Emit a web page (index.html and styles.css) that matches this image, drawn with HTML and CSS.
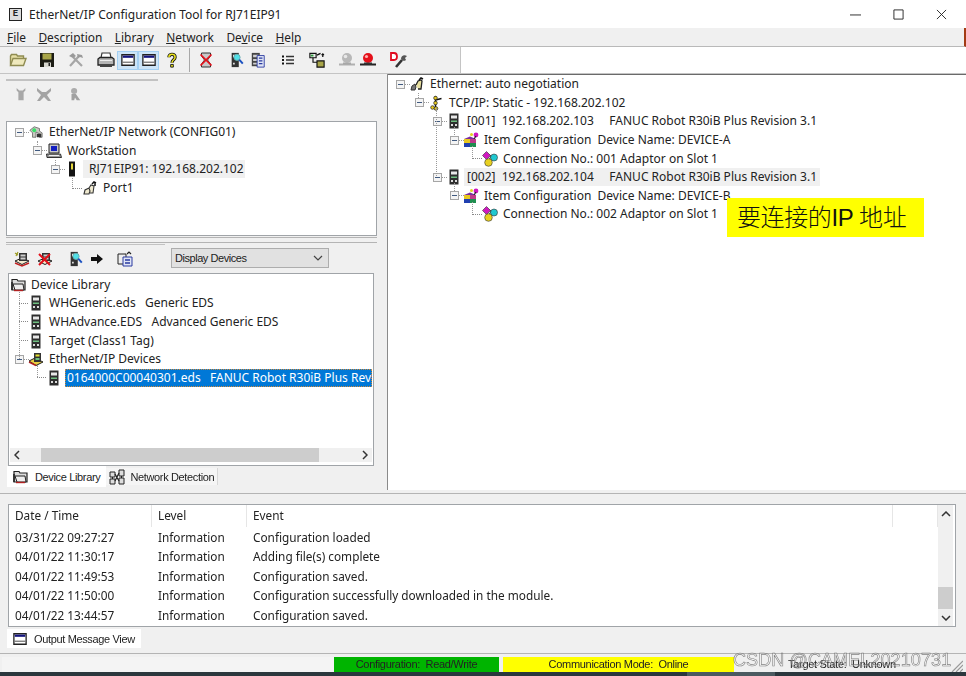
FILE: index.html
```html
<!DOCTYPE html>
<html lang="en">
<head>
  <meta charset="UTF-8" />
  <title>EtherNet/IP Configuration Tool for RJ71EIP91</title>
  <link rel="stylesheet" href="styles.css">
</head>
<body>
  <svg class="defs" aria-hidden="true">
    <symbol id="i-folder" viewBox="0 0 18 16"><path d="M1.5 13V4l1-1.500h5l1 1.500h6v2" fill="#e6dfa6" stroke="#8f8c52" stroke-width="1.400"/><path d="M1.500 13.500l2.500-7h13l-2.500 7z" fill="#efe9bd" stroke="#8f8c52" stroke-width="1.400"/></symbol>
    <symbol id="i-save" viewBox="0 0 16 16"><path d="M1 1h14v14H1z" fill="#1c1c14"/><path d="M3.500 1.500h9v6h-9z" fill="#a8a548"/><path d="M5 10.500h7v4.500H5z" fill="#d8d8d0"/><path d="M9.500 11h1.500v3H9.500z" fill="#222"/></symbol>
    <symbol id="i-tools" viewBox="0 0 16 16"><path d="M2 14L11 4M14 14L5 5" stroke="#a6a6a6" stroke-width="2.200"/><path d="M1 4l4-3 3 3-3 2zM9 2l5 1 1 3-3-1-2 1z" fill="#9a9a9a"/></symbol>
    <symbol id="i-print" viewBox="0 0 18 16"><path d="M5 1h8l1 5H4z" fill="#fff" stroke="#333" stroke-width="1.200"/><path d="M1 7l2-1.500h12l2 1.500v6H1z" fill="#b5b5b5" stroke="#222" stroke-width="1.300"/><path d="M3 13h12v2H3z" fill="#444"/><path d="M3 8.500h12" stroke="#eee"/></symbol>
    <symbol id="i-panel" viewBox="0 0 16 14"><path d="M1 1h14v12H1z" fill="#fff" stroke="#222" stroke-width="1.500"/><path d="M2 2h12v2.500H2z" fill="#12127e"/><path d="M2 9.500h12" stroke="#333"/></symbol>
    <symbol id="i-help" viewBox="0 0 16 18"><path d="M4.500 6c0-4.500 7-4.500 7 0 0 3-3.500 2.500-3.500 6" fill="none" stroke="#111" stroke-width="3.600"/><path d="M4.500 6c0-4.500 7-4.500 7 0 0 3-3.500 2.500-3.500 6" fill="none" stroke="#ece41e" stroke-width="1.700"/><path d="M6.500 14h3v3h-3z" fill="#ece41e" stroke="#111"/></symbol>
    <symbol id="i-del" viewBox="0 0 16 16"><path d="M3.500 1h9v3l-3 4 3 4v3h-9v-3l3-4-3-4z" fill="#c8c8c8" stroke="#333"/><path d="M2.500 2.500l11 11M13.500 2.500l-11 11" stroke="#e8101a" stroke-width="1.700"/></symbol>
    <symbol id="i-dev-find" viewBox="0 0 16 18"><path d="M2 1h8v16H2z" fill="#333"/><path d="M3.500 3h5v3h-5zM3.500 12h2v2h-2z" fill="#ddd"/><circle cx="8" cy="6" r="3.500" fill="#50e0e8" stroke="#6aa"/><path d="M10.500 8.500l4 4.500" stroke="#1a50c0" stroke-width="2.200"/></symbol>
    <symbol id="i-dev-list" viewBox="0 0 16 18"><path d="M1 1h9v15H1z" fill="#444"/><path d="M2.500 3h6v3h-6zM2.500 8h6v2h-6zM2.500 12h6v2h-6z" fill="#cfcfcf"/><path d="M7 4h8v13H7z" fill="#dfe4f5" stroke="#2a3aa0"/><path d="M9 7h4M9 10h4M9 13h4" stroke="#2a3aa0" stroke-width="1.400"/></symbol>
    <symbol id="i-list" viewBox="0 0 14 12"><path d="M1 1.500h2v2H1zM1 5h2v2H1zM1 8.500h2v2H1z" fill="#111"/><path d="M5 2.500h8M5 6h8M5 9.500h8" stroke="#333" stroke-width="1.400"/></symbol>
    <symbol id="i-net" viewBox="0 0 18 18"><path d="M1 1.500h7v5H1z" fill="#eee" stroke="#111" stroke-width="1.300"/><path d="M4.500 6.500v5h5" fill="none" stroke="#111" stroke-width="1.300"/><path d="M9 10h8v7H9z" fill="#a8a548" stroke="#111" stroke-width="1.300"/><path d="M9 3.500l4-2M14 3h3M15.500 1.500v4" stroke="#111" stroke-width="1.400"/><path d="M2 4h3" stroke="#2a9a3a" stroke-width="2"/></symbol>
    <symbol id="i-ball" viewBox="0 0 18 16"><circle cx="9" cy="6" r="5" fill="#b8b8b8"/><circle cx="7.500" cy="4.500" r="1.800" fill="#e8e8e8"/><path d="M1 12.500h16" stroke="#b0b0b0" stroke-width="2"/><path d="M5 10.500h8v2H5z" fill="#a8a8a8"/></symbol>
    <symbol id="i-ball-red" viewBox="0 0 18 16"><circle cx="9" cy="6" r="5" fill="#e4101a"/><circle cx="7.500" cy="4.500" r="1.600" fill="#ffb0b0"/><path d="M1 12.500h16" stroke="#222" stroke-width="2"/><path d="M5 10.500h8v2H5z" fill="#333"/></symbol>
    <symbol id="i-wrench" viewBox="0 0 18 16"><path d="M1 1h3c2 0 3 1.500 3 3.500S6 8 4 8H1z" fill="#fff" stroke="#e00c20" stroke-width="1.800"/><path d="M6 15l6-7" stroke="#333" stroke-width="2.600"/><path d="M11 7c0-3 3-5 6-3l-2 2 1 2c-2 1.500-4 1-5-1z" fill="#555"/></symbol>
    <symbol id="i-ant" viewBox="0 0 14 16"><path d="M2 1l3 3h4l3-3v3l-2 2v9H4V6L2 4z" fill="#a8a8a8"/></symbol>
    <symbol id="i-ant-x" viewBox="0 0 16 16"><path d="M1 1l5 4h4l5-4v3l-4 4 4 6h-3l-4-4-4 4H1l4-6-4-4z" fill="#a4a4a4"/></symbol>
    <symbol id="i-ant-s" viewBox="0 0 14 16"><circle cx="6" cy="4.500" r="3.500" fill="#ababab"/><path d="M3 8h5l5 7H9l-2-3-1 3H3z" fill="#a0a0a0"/></symbol>
    <symbol id="i-net-root" viewBox="0 0 16 14"><path d="M1 5l5-4 6 2v3l3 2v5h-3V9L8 7v6H4V8z" fill="#c8c8c0" stroke="#555" stroke-width=".8"/><circle cx="6" cy="5" r="2.200" fill="#38e068"/><path d="M9 9h5v4H9z" fill="#333"/></symbol>
    <symbol id="i-pc" viewBox="0 0 16 16"><path d="M3 1h10v9H3z" fill="#c8c8c8" stroke="#222"/><path d="M5 3h6v5H5z" fill="#1420c0"/><path d="M0.500 11h14l1 3.500H1z" fill="#999" stroke="#222" stroke-width=".9"/><path d="M3 12.500h10" stroke="#eee"/></symbol>
    <symbol id="i-module" viewBox="0 0 8 16"><path d="M1 .5h6v15H1z" fill="#141414"/><path d="M3 2.500h2v6H3z" fill="#e4d63c"/></symbol>
    <symbol id="i-port" viewBox="0 0 14 14"><path d="M1 13l1-4 4-2 1 3-1 3zM6 7l2-3 3 1-1 7H7" fill="#f0ead0" stroke="#333" stroke-width="1.100"/><path d="M9 3l2-2 2 1M12 2v3" fill="none" stroke="#111" stroke-width="1.500"/></symbol>
    <symbol id="i-eth" viewBox="0 0 14 14"><path d="M1 13l1-4 3-2 1 3-1 3z" fill="#777" stroke="#333"/><path d="M6 8l2-4 3-1 1 1-1 8H8" fill="#e8e0a0" stroke="#222" stroke-width="1.300"/><path d="M9 3l2-2 2 1" fill="none" stroke="#111" stroke-width="1.500"/></symbol>
    <symbol id="i-tcp" viewBox="0 0 14 16"><path d="M6.500 1v14M6.500 5l6-1.500" stroke="#111" stroke-width="1.500"/><circle cx="6.500" cy="3" r="1.800" fill="#e8cb20" stroke="#222" stroke-width=".7"/><circle cx="6.500" cy="8" r="1.800" fill="#e8cb20" stroke="#222" stroke-width=".7"/><circle cx="3.500" cy="12.500" r="1.800" fill="#e8cb20" stroke="#222" stroke-width=".7"/><circle cx="7" cy="13.500" r="1.800" fill="#e8cb20" stroke="#222" stroke-width=".7"/></symbol>
    <symbol id="i-device" viewBox="0 0 10 16"><path d="M.5 .5h9v15h-9z" fill="#2e2e2e"/><path d="M2 2.500h6v3H2z" fill="#e8e8e8"/><path d="M2 7.500h6v1.500H2z" fill="#6fbf80"/><path d="M2 11h2v2H2zM6 11h2v2H6z" fill="#ddd"/></symbol>
    <symbol id="i-item" viewBox="0 0 16 16"><path d="M1 7l6-2.500 6 2.500v8H1z" fill="#7a2ea0"/><path d="M1 7h6v4H1z" fill="#e8c820"/><path d="M7 11h6v4H7z" fill="#1f8f50"/><path d="M1 11h6v4H1z" fill="#2040b0"/><path d="M7 7h6v4H7z" fill="#c03a8a"/><circle cx="13" cy="3" r="2.400" fill="#d018c0"/><path d="M11 7l2-3" stroke="#222" stroke-width="1.200"/><circle cx="8.500" cy="2.600" r="1.500" fill="#e0d020"/></symbol>
    <symbol id="i-conn" viewBox="0 0 16 16"><path d="M4 2L9 5 6 11" stroke="#333" fill="none"/><path d="M0.500 4.500L4.500.5l4 4-4 4z" fill="#d018c0" stroke="#333" stroke-width=".6"/><circle cx="12" cy="6.500" r="3.500" fill="#20c8d0" stroke="#333" stroke-width=".6"/><circle cx="6.500" cy="11.500" r="3.800" fill="#e8d020" stroke="#333" stroke-width=".6"/></symbol>
    <symbol id="i-lib" viewBox="0 0 16 14"><path d="M1 3V1.500h5l1 1.500h7v9H1z" fill="#ddd" stroke="#222" stroke-width="1.200"/><path d="M2 6h10l1 6H4z" fill="#eee" stroke="#222"/><path d="M3 12.500h9" stroke="#b02020" stroke-width="1.400"/><path d="M1 4v8" stroke="#222" stroke-width="1.500"/></symbol>
    <symbol id="i-devbook" viewBox="0 0 16 14"><path d="M1 9l6-3 8 4-7 3.500z" fill="#e8d040" stroke="#222"/><path d="M6 1h7v9H6z" fill="#333"/><path d="M7.500 2.500h4v2h-4z" fill="#e6e030"/><path d="M7.500 6h4v2h-4z" fill="#6fbf80"/><path d="M1 10l7 3.500" stroke="#b02020" stroke-width="1.400"/></symbol>
    <symbol id="i-book-add" viewBox="0 0 16 16"><path d="M1 10l7 3.500 7-3.500-7-3z" fill="#f4ecd0" stroke="#222"/><path d="M5 2h8v8H5z" fill="#333"/><path d="M6.500 3.500h5v2h-5zM6.500 6.500h5v2h-5z" fill="#ccc"/><path d="M1 12l7 3 7-3" fill="none" stroke="#c02020" stroke-width="1.400"/><path d="M1 2l3 2M4 1L2 5" stroke="#9a9a20" stroke-width="1.200"/></symbol>
    <symbol id="i-book-x" viewBox="0 0 16 16"><path d="M1 10l7 3.500 7-3.500-7-3z" fill="#f4ecd0" stroke="#222"/><path d="M5 2h8v8H5z" fill="#333"/><path d="M6.500 3.500h5v2h-5zM6.500 6.500h5v2h-5z" fill="#ccc"/><path d="M2 3l11 11M13 3L2 14" stroke="#e4101a" stroke-width="2"/></symbol>
    <symbol id="i-arrow" viewBox="0 0 14 12"><path d="M1 4h6V1l6 5-6 5V8H1z" fill="#111"/></symbol>
    <symbol id="i-copy" viewBox="0 0 16 16"><path d="M1 3h8v10H1z" fill="#eee" stroke="#222"/><path d="M6 6h9v9H6z" fill="#dfe4f5" stroke="#2a3aa0"/><path d="M8 9h5M8 12h5" stroke="#2a3aa0" stroke-width="1.300"/><path d="M10 3l2-2 2 2" fill="none" stroke="#222" stroke-width="1.200"/></symbol>
    <symbol id="i-netdet" viewBox="0 0 16 16"><path d="M1 3h5v5H1zM10 1h5v6h-5zM1 10h5v5H1zM10 9h5v6h-5z" fill="#ddd" stroke="#222"/><path d="M3.500 8v2M12.500 7v2M6 5l4 7M10 4l-4 8" stroke="#222" stroke-width="1.200"/></symbol>
  </svg>

  <div class="window">
    <header class="titlebar">
      <span class="app-icon">E</span>
      <span class="app-title">EtherNet/IP Configuration Tool for RJ71EIP91</span>
      <div class="win-controls">
        <svg class="win-btn" viewBox="0 0 12 12"><path d="M0 6.500h12" stroke="#222"/></svg>
        <svg class="win-btn" viewBox="0 0 12 12"><path d="M1 1h10v10H1z" fill="none" stroke="#222"/></svg>
        <svg class="win-btn" viewBox="0 0 12 12"><path d="M1 1l10 10M11 1L1 11" stroke="#222"/></svg>
      </div>
    </header>

    <nav class="menubar">
      <span><u>F</u>ile</span>
      <span><u>D</u>escription</span>
      <span><u>L</u>ibrary</span>
      <span><u>N</u>etwork</span>
      <span>De<u>v</u>ice</span>
      <span><u>H</u>elp</span>
    </nav>

    <div class="toolbar">
      <div class="tools">
        <span class="tb-btn"><svg class="ic-18"><use href="#i-folder"/></svg></span>
        <span class="tb-btn g8"><svg class="ic-16"><use href="#i-save"/></svg></span>
        <span class="tb-btn g8"><svg class="ic-16"><use href="#i-tools"/></svg></span>
        <span class="tb-btn g9"><svg class="ic-18"><use href="#i-print"/></svg></span>
        <span class="tb-btn g1 active"><svg class="ic-14"><use href="#i-panel"/></svg></span>
        <span class="tb-btn active"><svg class="ic-14"><use href="#i-panel"/></svg></span>
        <span class="tb-btn g2"><svg class="ic-16"><use href="#i-help"/></svg></span>
        <span class="tb-sep"></span>
        <span class="tb-btn g5"><svg class="ic-16"><use href="#i-del"/></svg></span>
        <span class="tb-btn g10"><svg class="ic-16"><use href="#i-dev-find"/></svg></span>
        <span class="tb-btn"><svg class="ic-16"><use href="#i-dev-list"/></svg></span>
        <span class="tb-btn g9"><svg class="ic-14"><use href="#i-list"/></svg></span>
        <span class="tb-btn g8"><svg class="ic-18"><use href="#i-net"/></svg></span>
        <span class="tb-btn g9"><svg class="ic-18"><use href="#i-ball"/></svg></span>
        <span class="tb-btn"><svg class="ic-18"><use href="#i-ball-red"/></svg></span>
        <span class="tb-btn g10"><svg class="ic-18"><use href="#i-wrench"/></svg></span>
      </div>
      <div class="tool-blank"></div>
    </div>

    <main class="workspace">
      <section class="left">
        <div class="grip"></div>
        <div class="strip">
          <svg class="ic-14"><use href="#i-ant"/></svg>
          <svg class="ic-16 strip-x"><use href="#i-ant-x"/></svg>
          <svg class="ic-14 strip-s"><use href="#i-ant-s"/></svg>
        </div>

        <div class="tree-box net-tree">
          <div class="row lv0"><span class="exp"></span><span class="slot"><svg class="ic-14"><use href="#i-net-root"/></svg></span><span class="label">EtherNet/IP Network (CONFIG01)</span></div>
          <div class="row lv1"><span class="exp"></span><span class="slot"><svg class="ic-16"><use href="#i-pc"/></svg></span><span class="label">WorkStation</span></div>
          <div class="row lv2"><span class="exp"></span><span class="slot"><svg class="ic-module"><use href="#i-module"/></svg></span><span class="label hl">RJ71EIP91: 192.168.202.102</span></div>
          <div class="row lv-port"><span class="dash"></span><span class="slot"><svg class="ic-14"><use href="#i-port"/></svg></span><span class="label">Port1</span></div>
          <span class="vline v-a"></span><span class="vline v-b"></span><span class="vline v-c"></span>
        </div>

        <div class="splitter"></div>
        <div class="grip grip-2"></div>
        <div class="lib-tools">
          <svg class="ic-16"><use href="#i-book-add"/></svg>
          <svg class="ic-16 g-tight"><use href="#i-book-x"/></svg>
          <svg class="ic-16 g-wide"><use href="#i-dev-find"/></svg>
          <svg class="ic-14 g-arrow"><use href="#i-arrow"/></svg>
          <svg class="ic-16 g-copy"><use href="#i-copy"/></svg>
          <div class="combo">Display Devices<svg class="combo-arrow" viewBox="0 0 10 6"><path d="M1 1l4 4 4-4" fill="none" stroke="#444" stroke-width="1.200"/></svg></div>
        </div>

        <div class="tree-box lib-tree">
          <div class="row lib-root"><span class="slot"><svg class="ic-16"><use href="#i-lib"/></svg></span><span class="label">Device Library</span></div>
          <div class="row lib-leaf"><span class="dash short"></span><span class="slot"><svg class="ic-device"><use href="#i-device"/></svg></span><span class="label">WHGeneric.eds   Generic EDS</span></div>
          <div class="row lib-leaf"><span class="dash short"></span><span class="slot"><svg class="ic-device"><use href="#i-device"/></svg></span><span class="label">WHAdvance.EDS   Advanced Generic EDS</span></div>
          <div class="row lib-leaf"><span class="dash short"></span><span class="slot"><svg class="ic-device"><use href="#i-device"/></svg></span><span class="label">Target (Class1 Tag)</span></div>
          <div class="row lib-group"><span class="exp"></span><span class="slot"><svg class="ic-16"><use href="#i-devbook"/></svg></span><span class="label">EtherNet/IP Devices</span></div>
          <div class="row lib-sub"><span class="dash short"></span><span class="slot"><svg class="ic-device"><use href="#i-device"/></svg></span><span class="label selected">0164000C00040301.eds   FANUC Robot R30iB Plus Rev</span></div>
          <span class="vline v-d"></span><span class="vline v-e"></span>
          <div class="hscroll">
            <svg class="h-arrow" viewBox="0 0 6 10"><path d="M5 1L1 5l4 4" fill="none" stroke="#333" stroke-width="1.500"/></svg>
            <div class="h-track"><div class="h-thumb"></div></div>
            <svg class="h-arrow" viewBox="0 0 6 10"><path d="M1 1l4 4-4 4" fill="none" stroke="#333" stroke-width="1.500"/></svg>
          </div>
        </div>

        <div class="tabs">
          <div class="tab active"><svg class="ic-16"><use href="#i-lib"/></svg>Device Library</div>
          <div class="tab"><svg class="ic-16"><use href="#i-netdet"/></svg>Network Detection</div>
        </div>
      </section>

      <section class="right">
        <div class="row r0"><span class="exp"></span><span class="slot"><svg class="ic-14"><use href="#i-eth"/></svg></span><span class="label">Ethernet: auto negotiation</span></div>
        <div class="row r1"><span class="exp"></span><span class="slot"><svg class="ic-16"><use href="#i-tcp"/></svg></span><span class="label">TCP/IP: Static - 192.168.202.102</span></div>
        <div class="row r2"><span class="exp"></span><span class="slot"><svg class="ic-device"><use href="#i-device"/></svg></span><span class="label">[001]  192.168.202.103     FANUC Robot R30iB Plus Revision 3.1</span></div>
        <div class="row r3"><span class="exp"></span><span class="slot"><svg class="ic-16"><use href="#i-item"/></svg></span><span class="label">Item Configuration  Device Name: DEVICE-A</span></div>
        <div class="row r4"><span class="dash"></span><span class="slot"><svg class="ic-16"><use href="#i-conn"/></svg></span><span class="label">Connection No.: 001 Adaptor on Slot 1</span></div>
        <div class="row r2"><span class="exp"></span><span class="slot"><svg class="ic-device"><use href="#i-device"/></svg></span><span class="label hl-wide">[002]  192.168.202.104     FANUC Robot R30iB Plus Revision 3.1</span></div>
        <div class="row r3"><span class="exp"></span><span class="slot"><svg class="ic-16"><use href="#i-item"/></svg></span><span class="label">Item Configuration  Device Name: DEVICE-B</span></div>
        <div class="row r4"><span class="dash"></span><span class="slot"><svg class="ic-16"><use href="#i-conn"/></svg></span><span class="label">Connection No.: 002 Adaptor on Slot 1</span></div>
        <span class="vline v-f"></span><span class="vline v-g"></span><span class="vline v-h"></span><span class="vline v-i"></span><span class="vline v-j"></span><span class="vline v-k"></span>
        <div class="callout">要连接的IP 地址</div>
      </section>
    </main>

    <section class="output">
      <div class="log-box">
        <div class="log-grid">
          <div class="log-head">Date / Time</div><div class="log-head">Level</div><div class="log-head">Event</div><div class="log-head"></div>
          <div>03/31/22 09:27:27</div><div>Information</div><div class="wide">Configuration loaded</div>
          <div>04/01/22 11:30:17</div><div>Information</div><div class="wide">Adding file(s) complete</div>
          <div>04/01/22 11:49:53</div><div>Information</div><div class="wide">Configuration saved.</div>
          <div>04/01/22 11:50:00</div><div>Information</div><div class="wide">Configuration successfully downloaded in the module.</div>
          <div>04/01/22 13:44:57</div><div>Information</div><div class="wide">Configuration saved.</div>
        </div>
        <div class="vscroll">
          <svg class="v-arrow" viewBox="0 0 10 6"><path d="M1 5l4-4 4 4" fill="none" stroke="#333" stroke-width="1.500"/></svg>
          <div class="v-track"><div class="v-thumb"></div></div>
          <svg class="v-arrow" viewBox="0 0 10 6"><path d="M1 1l4 4 4-4" fill="none" stroke="#333" stroke-width="1.500"/></svg>
        </div>
      </div>
      <div class="tabs output-tabs">
        <div class="tab active"><svg class="ic-14"><use href="#i-panel"/></svg>Output Message View</div>
      </div>
    </section>

    <footer class="statusbar">
      <div class="st-empty"></div>
      <div class="st-green">Configuration:  Read/Write</div>
      <div class="st-yellow">Communication Mode:  Online</div>
      <div class="st-target">Target State:  Unknown</div>
      <svg class="st-resize" viewBox="0 0 12 12"><path d="M1 12L12 1M5 12l7-7M9 12l3-3" stroke="#999" stroke-width="1.200"/></svg>
    </footer>
    <div class="taskstrip"><span class="task-seg"></span></div>
    <div class="watermark">CSDN @CAMEL20210731</div>
  </div>
</body>
</html>
```

FILE: styles.css
```css
* {
  box-sizing: border-box;
}
body {
  margin: 0;
  background: #f0f0f0;
  font-family: 'Noto Sans', sans-serif;
  font-size: 12px;
  color: #222;
}
.defs {
  position: absolute;
  width: 0;
  height: 0;
}
.window {
  position: relative;
  width: 966px;
  height: 676px;
  overflow: hidden;
  display: flex;
  flex-direction: column;
  filter: blur(0.35px);
}
svg {
  flex: none;
  display: block;
}
.ic-14 { width: 14px; height: 14px; }
.ic-16 { width: 16px; height: 16px; }
.ic-18 { width: 18px; height: 16px; }
.ic-device { width: 10px; height: 16px; }
.ic-module { width: 8px; height: 16px; }

/* title + menu */
.titlebar {
  height: 28px;
  background: #fff;
  display: flex;
  align-items: center;
  padding-left: 9px;
}
.app-icon {
  width: 13px;
  height: 13px;
  border: 1px solid #222;
  background: #ddd;
  font: bold 9px/11px 'Liberation Mono', monospace;
  text-align: center;
}
.app-title {
  margin-left: 7px;
  font-size: 12px;
}
.win-controls {
  margin-left: auto;
  display: flex;
  gap: 32px;
  padding-right: 19px;
}
.win-btn {
  width: 11px;
  height: 11px;
}
.menubar {
  height: 19px;
  background: #f0f0f0;
  border-bottom: 1px solid #b9b9b9;
  border-right: 2px solid #a33b14;
  display: flex;
  align-items: center;
  gap: 12.400px;
  padding-left: 7px;
  font-size: 11.900px;
}
.toolbar {
  height: 27px;
  display: flex;
  border-bottom: 1px solid #c4c4c4;
}
.tools {
  width: 461px;
  display: flex;
  align-items: center;
  padding-left: 7px;
  background: #f0f0f0;
  border-right: 1px solid #c4c4c4;
}
.tool-blank {
  flex: 1;
  background: #fff;
}
.tb-btn {
  width: 21px;
  height: 19px;
  display: flex;
  align-items: center;
  justify-content: center;
  border: 1px solid transparent;
}
.tb-btn.active {
  background: #cce4f7;
  border-color: #a3cff2;
}
.g1 { margin-left: 1px; }
.g2 { margin-left: 2px; }
.g5 { margin-left: 5px; }
.g8 { margin-left: 8px; }
.g9 { margin-left: 9px; }
.g10 { margin-left: 10px; }
.tb-sep {
  width: 1px;
  height: 24px;
  margin-left: 7px;
  background: #a8a8a8;
}

/* main panes */
.workspace {
  height: 416px;
  display: grid;
  grid-template-columns: 388px 1fr;
}
.left {
  background: #f0f0f0;
  border-right: 1px solid #8a8a8a;
  padding-top: 5px;
}
.grip {
  width: 152px;
  height: 2px;
  margin-left: 6px;
  background: #c2c2c2;
}
.strip {
  height: 40px;
  display: flex;
  align-items: flex-start;
  padding: 6px 0 0 14px;
}
.strip-x { margin-left: 8px; }
.strip-s { margin-left: 16px; }
.tree-box {
  position: relative;
  background: #fff;
  border: 1px solid #a0a4a8;
}
.net-tree {
  width: 371px;
  height: 115px;
  margin-left: 6px;
  padding-top: 1px;
}
.splitter {
  width: 371px;
  height: 6px;
  margin: 1px 0 0 6px;
  border-top: 1px solid #b4b4b4;
  border-bottom: 1px solid #b4b4b4;
}
.grip-2 {
  width: 159px;
  height: 1px;
  margin-top: 1px;
}
.lib-tools {
  height: 28px;
  display: flex;
  align-items: center;
  padding-left: 14px;
}
.g-tight { margin-left: 7px; }
.g-wide { margin-left: 15px; }
.g-arrow { margin-left: 6px; }
.g-copy { margin-left: 13px; }
.combo {
  width: 158px;
  height: 20px;
  margin-left: 38px;
  align-self: flex-start;
  margin-top: 3px;
  display: flex;
  align-items: center;
  justify-content: space-between;
  padding: 0 5px 0 3px;
  background: #e1e1e1;
  border: 1px solid #adadad;
  font: 11px 'Liberation Sans', sans-serif;
  letter-spacing: -0.45px;
}
.combo-arrow {
  width: 10px;
  height: 6px;
}
.lib-tree {
  width: 366px;
  height: 193px;
  margin-left: 8px;
  padding-top: 1.500px;
}
.row {
  height: 18.600px;
  display: flex;
  align-items: center;
  white-space: pre;
  font-size: 12px;
}
.exp {
  flex: none;
  position: relative;
  width: 9px;
  height: 9px;
  margin-right: 4px;
  border: 1px solid #a6a6a6;
  background: #f4f4f4;
}
.exp::before {
  content: "";
  position: absolute;
  left: 1px;
  right: 1px;
  top: 3px;
  height: 1px;
  background: #405a80;
}
.exp::after {
  content: "";
  position: absolute;
  left: 8px;
  top: 3px;
  width: 5px;
  border-top: 1px dotted #999;
}
.dash {
  flex: none;
  width: 10px;
  border-top: 1px dotted #888;
}
.dash.short {
  width: 9px;
}
.slot {
  flex: none;
  width: 16px;
  display: flex;
  justify-content: center;
}
.label {
  padding-left: 5px;
  line-height: 18px;
}
.hl {
  margin-left: 3px;
  padding: 0 1px 0 6px;
  background: #f0f0f0;
}
.hl-wide {
  margin-left: 2px;
  padding: 0 3px;
  background: #f0f0f0;
}
.selected {
  flex: 1;
  min-width: 0;
  overflow: hidden;
  margin: 0 1px 0 3px;
  padding-left: 2px;
  background: #0078d7;
  color: #fff;
  outline: 1px dotted #d08a3c;
  outline-offset: -1px;
}
.vline {
  position: absolute;
  border-left: 1px dotted #999;
}
.lv0 { margin-left: 8px; }
.lv1 { margin-left: 26px; }
.lv2 { margin-left: 44px; }
.lv-port { margin-left: 65px; }
.v-a { left: 30px; top: 19px; height: 6px; }
.v-b { left: 48px; top: 38px; height: 5px; }
.v-c { left: 65px; top: 56px; height: 9px; }
.lib-root { margin-left: 2px; }
.lib-root .label { padding-left: 4px; }
.lib-leaf { margin-left: 10px; }
.lib-group { margin-left: 6px; }
.lib-sub { margin-left: 28px; }
.v-d { left: 10px; top: 18px; height: 67px; }
.v-e { left: 28px; top: 91px; height: 12px; }
.hscroll {
  position: absolute;
  left: 1px;
  right: 1px;
  bottom: 3px;
  height: 14px;
  display: flex;
  align-items: center;
  background: #f0f0f0;
}
.h-arrow {
  width: 6px;
  height: 10px;
  margin: 0 4px;
}
.h-track {
  flex: 1;
  height: 14px;
  padding-left: 17px;
}
.h-thumb {
  width: 278px;
  height: 14px;
  background: #cdcdcd;
}
.tabs {
  display: flex;
  margin-left: 7px;
  font: 11px 'Liberation Sans', sans-serif;
  letter-spacing: -0.35px;
}
.tab {
  height: 17px;
  margin-top: 2px;
  display: flex;
  align-items: center;
  gap: 5px;
  padding: 0 3px 0 3px;
  background: #f5f5f5;
  border-right: 1px solid #d8d8d8;
}
.tab.active {
  height: 21px;
  margin-top: 0;
  padding: 0 6px;
  gap: 6px;
  background: #fff;
  border-right: 0;
}
.right {
  position: relative;
  background: #fff;
  border-top: 1px solid #6a6a6a;
}
.r0 { margin-left: 8px; }
.r1 { margin-left: 27px; }
.r2 { margin-left: 45px; }
.r3 { margin-left: 62px; }
.r4 { margin-left: 84px; }
.v-f { left: 30px; top: 18px; height: 5px; }
.v-g { left: 48px; top: 33px; height: 68px; }
.v-h { left: 66px; top: 52px; height: 8px; }
.v-i { left: 66px; top: 108px; height: 8px; }
.v-j { left: 84px; top: 71px; height: 11px; }
.v-k { left: 84px; top: 127px; height: 11px; }
.callout {
  position: absolute;
  left: 339px;
  top: 123px;
  width: 197px;
  height: 39px;
  padding-left: 10px;
  background: #ffff00;
  color: #111;
  font: 300 24px/39px 'Liberation Sans', 'Noto Sans CJK SC', sans-serif;
  letter-spacing: -0.4px;
  white-space: nowrap;
}

/* output */
.output {
  height: 163px;
  background: #f0f0f0;
  border-top: 3px solid #f0f0f0;
}
.output::before {
  content: "";
  display: block;
  height: 10px;
  border-top: 1px solid #b4b4b4;
}
.log-box {
  width: 948px;
  height: 123px;
  margin-left: 8px;
  display: flex;
  background: #fff;
  border: 1px solid #a0a4a8;
}
.log-grid {
  flex: 1;
  display: grid;
  grid-template-columns: 143px 95px 646px 1fr;
  grid-template-rows: 22px;
  grid-auto-rows: 19.500px;
  align-items: center;
  font-size: 11.800px;
  white-space: nowrap;
}
.log-grid > div {
  padding-left: 6px;
}
.log-grid .log-head {
  height: 22px;
  line-height: 20px;
  border-right: 1px solid #e6e6e6;
}
.log-grid .wide {
  grid-column: span 2;
}
.vscroll {
  width: 15px;
  display: flex;
  flex-direction: column;
  align-items: center;
  background: #f0f0f0;
  margin-right: 2px;
}
.v-arrow {
  width: 10px;
  height: 6px;
  margin: 6px 0;
}
.v-track {
  flex: 1;
  width: 100%;
}
.v-thumb {
  width: 100%;
  height: 22px;
  margin-top: 64px;
  background: #cdcdcd;
}
.output-tabs {
  margin-top: 2px;
}
.output-tabs .tab.active {
  height: 19px;
  gap: 7px;
}
.statusbar {
  height: 19px;
  padding-top: 3px;
  display: flex;
  border-top: 1px solid #b4b4b4;
  font: 11px/15px 'Liberation Sans', sans-serif;
  letter-spacing: -0.3px;
  white-space: pre;
}
.st-empty {
  width: 332px;
  margin-left: 2px;
  background: #f4f4f4;
}
.st-green {
  width: 165px;
  background: #00b400;
  text-align: center;
}
.st-yellow {
  width: 231px;
  margin-left: 4px;
  background: #ffff00;
  text-align: center;
}
.st-target {
  margin-left: 54px;
}
.st-resize {
  margin-left: auto;
  margin-right: 3px;
  width: 12px;
  height: 12px;
  align-self: flex-end;
}
.taskstrip {
  flex: 1;
  background: #2b373d;
}
.task-seg {
  display: block;
  width: 88px;
  height: 100%;
  margin-left: 687px;
  background: #4b5a60;
}
.watermark {
  position: absolute;
  left: 733px;
  top: 649px;
  font: 18px/22px 'Liberation Sans', sans-serif;
  letter-spacing: 0.1px;
  color: rgba(255, 255, 255, 0.35);
  -webkit-text-stroke: 0.6px rgba(90, 90, 90, 0.75);
  white-space: nowrap;
}
```
